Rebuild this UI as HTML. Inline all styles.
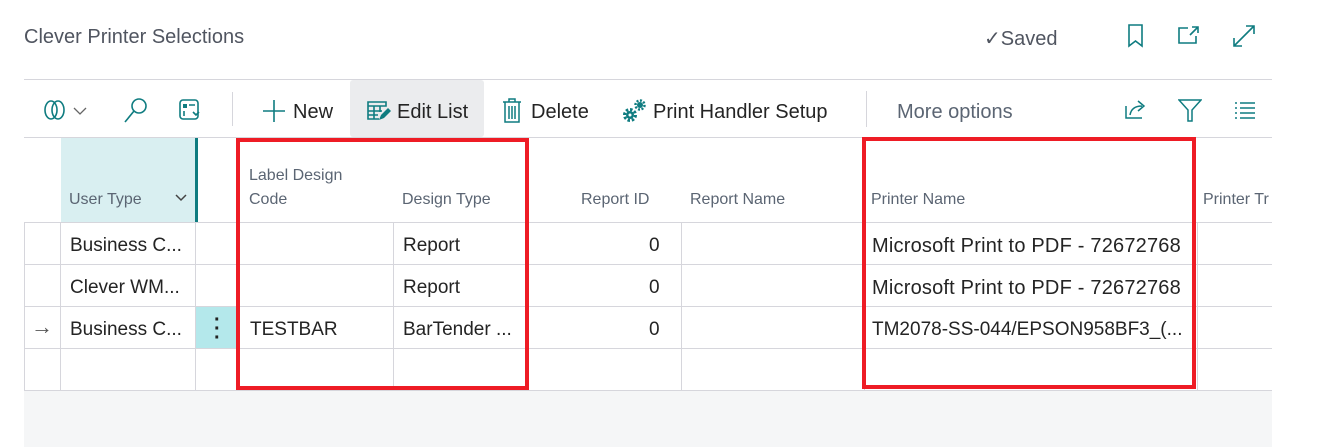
<!DOCTYPE html><html><head><style>
body{margin:0;width:1319px;height:447px;background:#fff;position:relative;overflow:hidden;font-family:"Liberation Sans",sans-serif;}
.a{position:absolute;white-space:nowrap}
.t{font-size:19px;color:#242424}
.h{font-size:16px;color:#5b6573}
.hl{position:absolute;height:1px;background:#d6d6dc}
.vl{position:absolute;width:1px;background:#d6d6dc}
.tb{font-size:20px;color:#242424}
svg{position:absolute}
</style></head><body>
<div class="a" style="left:24px;top:26px;font-size:20px;color:#505560">Clever Printer Selections</div>
<div class="a" style="left:984px;top:26px;font-size:20px;color:#505560">✓Saved</div>
<svg style="left:1126px;top:24px" width="20" height="24" viewBox="0 0 20 24"><path d="M3 1h13v21l-6.5-5-6.5 5z" fill="none" stroke="#0f7c80" stroke-width="1.6"/></svg>
<svg style="left:1176px;top:24px" width="26" height="22" viewBox="0 0 26 22"><path d="M12 4H3v15h17v-7M16 3h6v6M22 3l-8 8" fill="none" stroke="#0f7c80" stroke-width="1.6"/></svg>
<svg style="left:1232px;top:24px" width="24" height="24" viewBox="0 0 24 24"><path d="M2 22L22 2M14 2h8v8M2 14v8h8" fill="none" stroke="#0f7c80" stroke-width="1.6"/></svg>
<div class="hl" style="left:24px;top:79px;width:1248px"></div>
<div class="a" style="left:350px;top:80px;width:134px;height:57px;background:#ebecee;border-radius:3px"></div>
<svg style="left:42px;top:98px" width="50" height="26" viewBox="0 0 50 26"><ellipse cx="9" cy="12" rx="6" ry="9" fill="none" stroke="#0f7c80" stroke-width="1.6"/><ellipse cx="16" cy="12" rx="6" ry="9" fill="none" stroke="#0f7c80" stroke-width="1.6"/><path d="M32 10l6 6 6-6" fill="none" stroke="#666" stroke-width="1.3"/></svg>
<svg style="left:122px;top:96px" width="28" height="28" viewBox="0 0 28 28"><circle cx="17" cy="10" r="7" fill="none" stroke="#0f7c80" stroke-width="1.6"/><path d="M12 15L3 26" stroke="#0f7c80" stroke-width="1.6"/></svg>
<svg style="left:178px;top:98px" width="24" height="24" viewBox="0 0 24 24"><rect x="2" y="2" width="18" height="19" rx="3" fill="none" stroke="#0f7c80" stroke-width="1.6"/><rect x="5" y="6" width="4" height="4" fill="#0f7c80"/><path d="M11 7h6M6 13v5M15 14l3 3 3-3" fill="none" stroke="#0f7c80" stroke-width="1.6"/></svg>
<div class="vl" style="left:232px;top:92px;height:34px"></div>
<svg style="left:262px;top:99px" width="24" height="24" viewBox="0 0 24 24"><path d="M12 1v22M1 12h22" stroke="#0f7c80" stroke-width="1.6"/></svg>
<div class="a tb" style="left:293px;top:101px">New</div>
<svg style="left:367px;top:100px" width="24" height="22" viewBox="0 0 24 22"><path d="M1 2h18v4H1zM1 6v13h11M1 11h14M1 15h10M7 6v13M13 6v6" fill="none" stroke="#0f7c80" stroke-width="1.6"/><path d="M12 20l2-5 7-7 3 3-7 7z" fill="#0f7c80"/></svg>
<div class="a tb" style="left:397px;top:101px">Edit List</div>
<svg style="left:501px;top:98px" width="22" height="26" viewBox="0 0 22 26"><path d="M2 4h18M8 4V1h6v3M4 4v20h14V4M8 8v13M11 8v13M14 8v13" fill="none" stroke="#0f7c80" stroke-width="1.5"/></svg>
<div class="a tb" style="left:531px;top:101px">Delete</div>
<svg style="left:621px;top:98px" width="26" height="26" viewBox="0 0 26 26"><circle cx="9" cy="17" r="4" fill="#0f7c80"/><circle cx="9" cy="17" r="5.5" fill="none" stroke="#0f7c80" stroke-width="3" stroke-dasharray="2.5 1.8"/><circle cx="9" cy="17" r="1.5" fill="#fff"/><circle cx="19" cy="7" r="3" fill="#0f7c80"/><circle cx="19" cy="7" r="4.5" fill="none" stroke="#0f7c80" stroke-width="2.5" stroke-dasharray="2 1.5"/></svg>
<div class="a tb" style="left:653px;top:101px">Print Handler Setup</div>
<div class="vl" style="left:866px;top:91px;height:36px"></div>
<div class="a" style="left:897px;top:101px;font-size:20px;color:#5b6573">More options</div>
<svg style="left:1124px;top:98px" width="24" height="22" viewBox="0 0 24 22"><path d="M2 8v12h16M6 17c1-6 5-9 12-9M14 3l6 5-6 5" fill="none" stroke="#0f7c80" stroke-width="1.5"/></svg>
<svg style="left:1178px;top:98px" width="24" height="24" viewBox="0 0 24 24"><path d="M1 2h22l-9 10v11h-4V12z" fill="none" stroke="#0f7c80" stroke-width="1.5"/></svg>
<svg style="left:1234px;top:101px" width="22" height="18" viewBox="0 0 22 18"><path d="M1 2h2M6 2h15M1 7h2M6 7h15M1 12h2M6 12h15M1 17h2M6 17h15" stroke="#0f7c80" stroke-width="1.5"/></svg>
<div class="hl" style="left:24px;top:137px;width:1248px"></div>
<div class="a" style="left:61px;top:138px;width:134px;height:84px;background:#d9eff1"></div>
<div class="a" style="left:195px;top:138px;width:3px;height:84px;background:#0f7c80"></div>
<div class="a h" style="left:69px;top:191px">User Type</div>
<svg style="left:175px;top:193px" width="12" height="10" viewBox="0 0 12 10"><path d="M1 2l5 5 5-5" fill="none" stroke="#444" stroke-width="1.5"/></svg>
<div class="a h" style="left:249px;top:167px">Label Design</div>
<div class="a h" style="left:249px;top:191px">Code</div>
<div class="a h" style="left:402px;top:191px">Design Type</div>
<div class="a h" style="left:581px;top:191px">Report ID</div>
<div class="a h" style="left:690px;top:191px">Report Name</div>
<div class="a h" style="left:871px;top:191px">Printer Name</div>
<div class="a h" style="left:1203px;top:191px">Printer Tr</div>
<div class="hl" style="left:24px;top:222px;width:1248px"></div>
<div class="hl" style="left:24px;top:264px;width:1248px"></div>
<div class="hl" style="left:24px;top:306px;width:1248px"></div>
<div class="hl" style="left:24px;top:348px;width:1248px"></div>
<div class="hl" style="left:24px;top:390px;width:1248px"></div>
<div class="vl" style="left:24px;top:222px;height:168px"></div>
<div class="vl" style="left:60px;top:222px;height:168px"></div>
<div class="vl" style="left:195px;top:222px;height:168px"></div>
<div class="vl" style="left:236px;top:222px;height:168px"></div>
<div class="vl" style="left:393px;top:222px;height:168px"></div>
<div class="vl" style="left:527px;top:222px;height:168px"></div>
<div class="vl" style="left:681px;top:222px;height:168px"></div>
<div class="vl" style="left:864px;top:222px;height:168px"></div>
<div class="vl" style="left:1197px;top:222px;height:168px"></div>
<div class="a" style="left:196px;top:307px;width:40px;height:41px;background:#b4e8eb"></div>
<div class="a" style="left:214px;top:316px;font-size:20px;color:#222;font-weight:bold;line-height:9px">·<br>·<br>·</div>
<div class="a" style="left:31px;top:314px;color:#555;font-size:22px">→</div>
<div class="a t" style="left:70px;top:235px">Business C...</div>
<div class="a t" style="left:70px;top:277px">Clever WM...</div>
<div class="a t" style="left:70px;top:319px">Business C...</div>
<div class="a t" style="left:250px;top:319px">TESTBAR</div>
<div class="a t" style="left:403px;top:235px">Report</div>
<div class="a t" style="left:403px;top:277px">Report</div>
<div class="a t" style="left:403px;top:319px">BarTender ...</div>
<div class="a t" style="left:649px;top:235px">0</div>
<div class="a t" style="left:649px;top:277px">0</div>
<div class="a t" style="left:649px;top:319px">0</div>
<div class="a t" style="left:872px;top:235px;font-size:20px;letter-spacing:0.2px">Microsoft Print to PDF - 72672768</div>
<div class="a t" style="left:872px;top:277px;font-size:20px;letter-spacing:0.2px">Microsoft Print to PDF - 72672768</div>
<div class="a t" style="left:872px;top:319px;font-size:19px">TM2078-SS-044/EPSON958BF3_(...</div>
<div class="a" style="left:24px;top:391px;width:1248px;height:56px;background:#f5f6f7"></div>
<div class="a" style="left:236px;top:138px;width:285px;height:244px;border:4px solid #ee1c25"></div>
<div class="a" style="left:862px;top:137px;width:326px;height:244px;border:4px solid #ee1c25"></div>
</body></html>
